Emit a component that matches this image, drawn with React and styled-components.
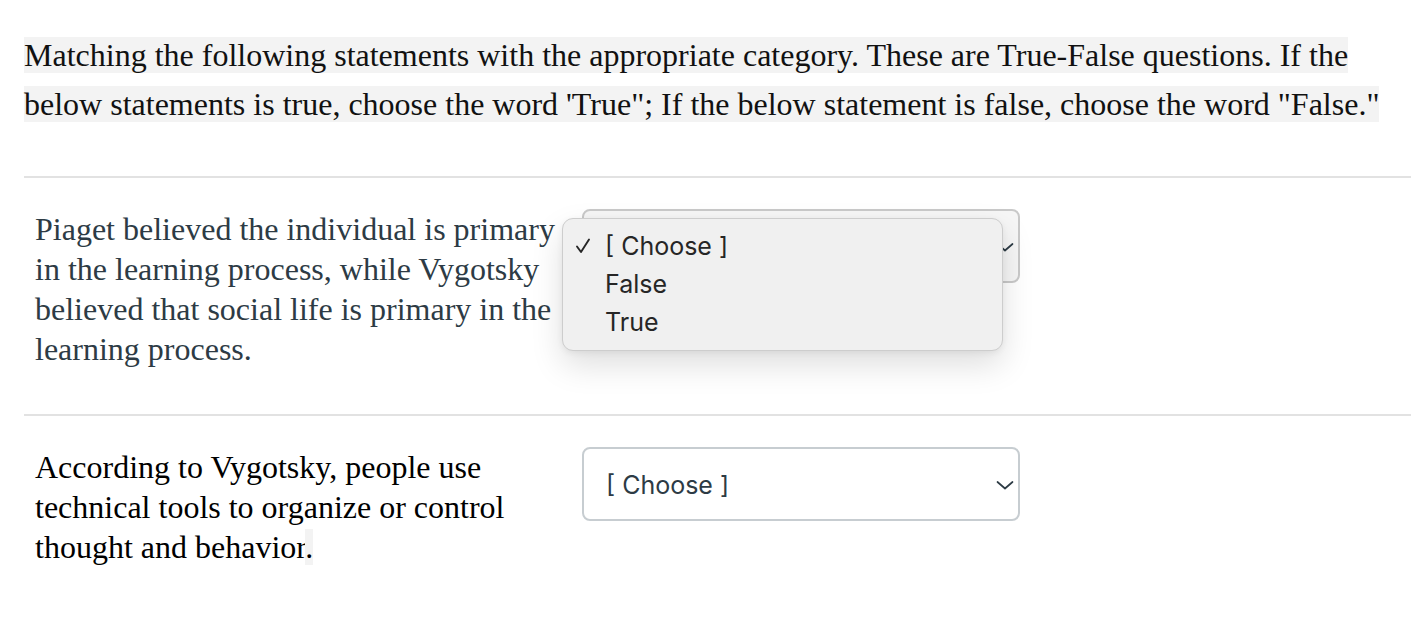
import React from "react"
import styled, { createGlobalStyle } from "styled-components"

const GlobalStyle = createGlobalStyle`
  body {
    margin: 0;
    background: #ffffff;
  }
`

const Page = styled.div`
  padding: 31px 17px 0 24px;
`

const Intro = styled.p`
  color: #111;
  font-family: "Liberation Serif", "Times New Roman", serif;
  font-size: 32px;
  line-height: 49px;
  margin: 0 0 47px;
  white-space: nowrap;
`

const Marked = styled.span`
  background: #f3f3f3;
`

const QuestionRow = styled.div`
  align-items: flex-start;
  border-top: 2px solid #e2e2e2;
  display: flex;
  gap: 22px;
  padding: ${props => props.padding || "31px 0 45px 11px"};
`

const Statement = styled.div`
  color: ${props => props.color || "#000"};
  font-family: "Liberation Serif", "Times New Roman", serif;
  font-size: 32px;
  line-height: 40px;
  white-space: nowrap;
  width: 525px;
`

const SelectWrap = styled.div`
  position: relative;
  width: 438px;
`

const SelectBox = styled.div`
  align-items: center;
  background: ${props => (props.active ? "#f6f6f6" : "#ffffff")};
  border: 2px solid ${props => (props.active ? "#c9c9c9" : "#c7cdd1")};
  border-radius: 8px;
  box-sizing: border-box;
  color: #2d3b45;
  display: flex;
  font-family: Inter, "Liberation Sans", sans-serif;
  font-size: 25px;
  height: 74px;
  justify-content: space-between;
  padding: 2px 3px 0 22px;
`

const Chevron = styled.svg`
  height: 20px;
  width: 20px;
`

const Popup = styled.div`
  background: #f0f0f0;
  border: 1px solid #cdcdcd;
  border-radius: 11px;
  box-shadow: 0 14px 32px rgba(0, 0, 0, 0.13), 0 2px 6px rgba(0, 0, 0, 0.06);
  box-sizing: border-box;
  left: -20px;
  padding: 8px 0 9px;
  position: absolute;
  top: 9px;
  width: 441px;
`

const Option = styled.div`
  align-items: center;
  color: #262626;
  display: flex;
  font-family: Inter, "Liberation Sans", sans-serif;
  font-size: 25px;
  height: 38px;
  padding-left: 11px;
`

const CheckSlot = styled.span`
  display: inline-flex;
  width: 31px;
`

const Check = () => (
  <svg width="18" height="18" viewBox="0 0 18 18">
    <path d="M3 9.5 L7 15 L15 2.5" fill="none" stroke="#262626" strokeWidth="1.9" strokeLinecap="round" strokeLinejoin="round" />
  </svg>
)

const DownArrow = () => (
  <Chevron viewBox="0 0 20 20">
    <path d="M2.5 7 L10 13.5 L17.5 7" fill="none" stroke="#2d3b45" strokeWidth="1.7" strokeLinecap="round" strokeLinejoin="round" />
  </Chevron>
)

const options = ["[ Choose ]", "False", "True"]

const App = () => {
  return (
    <Page>
      <GlobalStyle />
      <Intro>
        <Marked>
          Matching the following statements with the appropriate category. These are True-False questions. If the
        </Marked>
        <br />
        <Marked>
          below statements is true, choose the word 'True"; If the below statement is false, choose the word "False."
        </Marked>
      </Intro>

      <QuestionRow>
        <Statement color="#2d3b45">
          Piaget believed the individual is primary
          <br />
          in the learning process, while Vygotsky
          <br />
          believed that social life is primary in the
          <br />
          learning process.
        </Statement>
        <SelectWrap>
          <SelectBox active>
            <span />
            <DownArrow />
          </SelectBox>
          <Popup>
            {options.map((opt, i) => (
              <Option key={opt}>
                <CheckSlot>{i === 0 && <Check />}</CheckSlot>
                {opt}
              </Option>
            ))}
          </Popup>
        </SelectWrap>
      </QuestionRow>

      <QuestionRow padding="31px 0 56px 11px">
        <Statement>
          According to Vygotsky, people use
          <br />
          technical tools to organize or control
          <br />
          thought and behavior
          <Marked>.</Marked>
        </Statement>
        <SelectWrap>
          <SelectBox>
            [ Choose ]
            <DownArrow />
          </SelectBox>
        </SelectWrap>
      </QuestionRow>
    </Page>
  )
}

export default App
